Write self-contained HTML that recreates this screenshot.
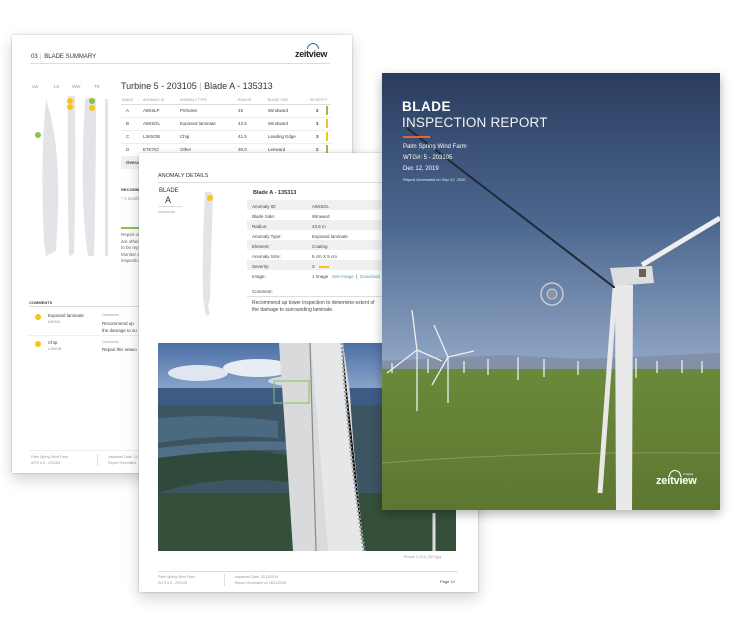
<!DOCTYPE html>
<html><head><meta charset="utf-8"><style>
*{margin:0;padding:0;box-sizing:border-box}
body{width:750px;height:628px;background:#fff;position:relative;overflow:hidden;font-family:"Liberation Sans",sans-serif;color:#333}
.a{position:absolute;white-space:nowrap}
.pg{position:absolute;background:#fff;box-shadow:0 6px 14px rgba(0,0,0,.18),0 0 2px rgba(0,0,0,.25)}
.t{font-size:4.5px;color:#444}
.g{color:#999}
</style></head><body>

<!-- Page 1 -->
<div class="pg" style="left:12px;top:35px;width:340px;height:438px">
 <div class="a" style="left:19px;top:19px;font-size:6px;color:#333">03 <span style="color:#bbb">|</span>&nbsp; BLADE SUMMARY</div>
 <div class="a" style="left:18px;top:28px;width:300px;height:1px;background:#ddd"></div>
 <div class="a" style="left:283px;top:14px;font-size:9px;font-weight:bold;color:#222;letter-spacing:-.3px">zeitview</div>
 <div class="a" style="left:295px;top:8px;width:12px;height:6px;border:1px solid #3a6ea5;border-bottom:none;border-radius:6px 6px 0 0"></div>
 <div class="a t g" style="left:20px;top:49px">LW</div>
 <div class="a t g" style="left:42px;top:49px">LE</div>
 <div class="a t g" style="left:60px;top:49px">WW</div>
 <div class="a t g" style="left:82px;top:49px">TE</div>
 <svg class="a" style="left:18px;top:56px" width="90" height="175">
  <path d="M16 8 Q30 50 28 120 L26 160 L16 165 L14 150 Q10 70 16 8Z" fill="#e3e4e8"/>
  <path d="M38 5 L45 5 Q46 90 44 163 L39 165 Q37 90 38 5Z" fill="#e3e4e8"/>
  <path d="M55 8 Q62 5 66 8 Q66 90 64 165 L58 165 L56 150 Q50 100 55 8Z" fill="#e3e4e8"/>
  <path d="M75 8 L78 8 L78 165 L75 165Z" fill="#e3e4e8"/>
  <circle cx="8" cy="44" r="3" fill="#8ac24a"/>
  <circle cx="40" cy="10" r="3" fill="#f5c518"/><circle cx="40" cy="16" r="3" fill="#f5c518"/>
  <circle cx="62" cy="10" r="3" fill="#8ac24a"/><circle cx="62" cy="17" r="3" fill="#f5c518"/>
 </svg>
 <div class="a" style="left:109px;top:46px;font-size:9px;color:#333">Turbine 5 - 203105 <span style="color:#bbb">|</span> Blade A - 135313</div>
 <div class="a t g" style="left:110px;top:63px;font-size:3.5px">IMAGE</div>
 <div class="a t g" style="left:131px;top:63px;font-size:3.5px">ANOMALY ID</div>
 <div class="a t g" style="left:168px;top:63px;font-size:3.5px">ANOMALY TYPE</div>
 <div class="a t g" style="left:226px;top:63px;font-size:3.5px">RADIUS</div>
 <div class="a t g" style="left:256px;top:63px;font-size:3.5px">BLADE SIDE</div>
 <div class="a t g" style="left:298px;top:63px;font-size:3.5px">SEVERITY</div>
 <div class="a" style="left:109px;top:69px;width:210px;height:1px;background:#ddd"></div>
 <div class="a t" style="left:114px;top:73px">A</div><div class="a t" style="left:131px;top:73px">A6K5LP</div><div class="a t" style="left:168px;top:73px">Pinholes</div><div class="a t" style="left:226px;top:73px">45</div><div class="a t" style="left:256px;top:73px">Windward</div><div class="a t" style="left:304px;top:73px;font-weight:bold">2</div><div class="a" style="left:314px;top:71px;width:2px;height:9px;background:#8ac24a"></div>
 <div class="a" style="left:109px;top:82px;width:210px;height:1px;background:#eee"></div>
 <div class="a t" style="left:114px;top:86px">B</div><div class="a t" style="left:131px;top:86px">A5K5OL</div><div class="a t" style="left:168px;top:86px">Exposed laminate</div><div class="a t" style="left:226px;top:86px">43.5</div><div class="a t" style="left:256px;top:86px">Windward</div><div class="a t" style="left:304px;top:86px;font-weight:bold">3</div><div class="a" style="left:314px;top:84px;width:2px;height:9px;background:#f5c518"></div>
 <div class="a" style="left:109px;top:95px;width:210px;height:1px;background:#eee"></div>
 <div class="a t" style="left:114px;top:99px">C</div><div class="a t" style="left:131px;top:99px">L2K5OB</div><div class="a t" style="left:168px;top:99px">Chip</div><div class="a t" style="left:226px;top:99px">41.5</div><div class="a t" style="left:256px;top:99px">Leading Edge</div><div class="a t" style="left:304px;top:99px;font-weight:bold">3</div><div class="a" style="left:314px;top:97px;width:2px;height:9px;background:#f5c518"></div>
 <div class="a" style="left:109px;top:108px;width:210px;height:1px;background:#eee"></div>
 <div class="a t" style="left:114px;top:112px">D</div><div class="a t" style="left:131px;top:112px">E7K7IO</div><div class="a t" style="left:168px;top:112px">Other</div><div class="a t" style="left:226px;top:112px">35.0</div><div class="a t" style="left:256px;top:112px">Leeward</div><div class="a t" style="left:304px;top:112px;font-weight:bold">2</div><div class="a" style="left:314px;top:110px;width:2px;height:9px;background:#8ac24a"></div>
 <div class="a" style="left:109px;top:121px;width:210px;height:13px;background:#f0f0f2"></div>
 <div class="a t" style="left:114px;top:125px;font-weight:bold">Overall</div>
 <div class="a t" style="left:109px;top:152px;font-weight:bold;font-size:4px">RECOMMENDATIONS</div>
 <div class="a t g" style="left:109px;top:161px">* A modified</div>
 <div class="a" style="left:109px;top:192px;width:30px;height:1.5px;background:#8ac24a"></div>
 <div class="a t" style="left:109px;top:197px;line-height:6.5px;color:#666">Repair on<br>are other<br>to be rep<br>Monitor a<br>inspectio</div>
 <div class="a t" style="left:17px;top:265px;font-weight:bold;font-size:4px">COMMENTS</div>
 <div class="a" style="left:17px;top:271px;width:310px;height:1px;background:#ddd"></div>
 <div class="a" style="left:23px;top:279px;width:6px;height:6px;border-radius:50%;background:#f5c518"></div>
 <div class="a t" style="left:36px;top:278px">Exposed laminate</div><div class="a t g" style="left:36px;top:285px;font-size:3.5px">A5K5OL</div>
 <div class="a t g" style="left:90px;top:278px;font-size:3.5px">Comments</div>
 <div class="a t" style="left:90px;top:285px;line-height:7px">Recommend up<br>the damage to su</div>
 <div class="a" style="left:17px;top:300px;width:310px;height:1px;background:#eee"></div>
 <div class="a" style="left:23px;top:306px;width:6px;height:6px;border-radius:50%;background:#f5c518"></div>
 <div class="a t" style="left:36px;top:305px">Chip</div><div class="a t g" style="left:36px;top:312px;font-size:3.5px">L2K5OB</div>
 <div class="a t g" style="left:90px;top:305px;font-size:3.5px">Comments</div>
 <div class="a t" style="left:90px;top:312px">Repair this seaso</div>
 <div class="a" style="left:17px;top:415px;width:310px;height:1px;background:#eee"></div>
 <div class="a t g" style="left:19px;top:420px;font-size:3.5px;line-height:5.5px">Palm Spring Wind Farm<br>WTG # 5 - 203105</div>
 <div class="a" style="left:85px;top:419px;width:1px;height:12px;background:#ddd"></div>
 <div class="a t g" style="left:96px;top:420px;font-size:3.5px;line-height:5.5px">Inspected Date: 12/12/2019<br>Report Generated</div>
</div>

<!-- Page 2 -->
<div class="pg" style="left:139px;top:153px;width:339px;height:439px">
 <div class="a" style="left:19px;top:20px;font-size:5.5px;color:#333">ANOMALY DETAILS</div>
 <div class="a" style="left:19px;top:29px;width:320px;height:1px;background:#ddd"></div>
 <div class="a" style="left:20px;top:35px;font-size:6px;color:#333">BLADE</div>
 <div class="a" style="left:26px;top:42px;font-size:9px;color:#333">A</div>
 <div class="a" style="left:19px;top:53px;width:24px;height:1px;background:#ddd"></div>
 <div class="a g" style="left:19px;top:57px;font-size:3px">WINDWARD</div>
 <svg class="a" style="left:58px;top:37px" width="20" height="128"><path d="M8 2 Q14 1 16 4 Q14 70 13 108 L11 116 L13 124 L9 126 L7 115 L6 106 Q5 60 8 2Z" fill="#e3e4e8"/><circle cx="13" cy="8" r="3" fill="#f5c518"/></svg>
 <div class="a" style="left:114px;top:37px;font-size:5.5px;font-weight:bold;color:#333">Blade A - 135313</div>
 <div class="a" style="left:108px;top:47px;width:231px;height:10px;background:#f0f0f2"></div>
 <div class="a" style="left:108px;top:67px;width:231px;height:10px;background:#f0f0f2"></div>
 <div class="a" style="left:108px;top:87px;width:231px;height:10px;background:#f0f0f2"></div>
 <div class="a" style="left:108px;top:107px;width:231px;height:10px;background:#f0f0f2"></div>
 <div class="a t" style="left:113px;top:49px;line-height:10px">Anomaly ID:<br>Blade Side:<br>Radius:<br>Anomaly Type:<br>Element:<br>Anomaly Size:<br>Severity:<br>Image:</div>
 <div class="a t" style="left:173px;top:49px;line-height:10px">A5K5OL<br>Winward<br>43.5 m<br>Exposed laminate<br>Coating<br>5 cm X 5 cm<br>3 <span style="display:inline-block;width:10px;height:1.5px;background:#f5c518;vertical-align:middle;margin-left:3px"></span><br>1 Image &nbsp;&nbsp;<span style="color:#4aa3b5">See Image</span> &nbsp;| &nbsp;<span style="color:#4aa3b5">Download</span></div>
 <div class="a t" style="left:113px;top:136px">Comment:</div>
 <div class="a" style="left:108px;top:143px;width:231px;height:1px;background:#ddd"></div>
 <div class="a t" style="left:113px;top:147px;font-size:5px;line-height:7px;color:#444">Recommend up tower inspection to determine extent of<br>the damage to surrounding laminate.</div>
 <!-- photo -->
 <svg class="a" style="left:19px;top:190px" width="298" height="208">
  <defs><linearGradient id="sk" x1="0" y1="0" x2="0" y2="1"><stop offset="0" stop-color="#4b6fa6"/><stop offset="1" stop-color="#9db5d6"/></linearGradient></defs>
  <rect width="298" height="60" fill="url(#sk)"/>
  <ellipse cx="40" cy="30" rx="30" ry="8" fill="#dfe6f0"/><ellipse cx="100" cy="25" rx="35" ry="9" fill="#e8edf4"/><ellipse cx="150" cy="38" rx="40" ry="6" fill="#cfd9e8"/>
  <rect y="45" width="298" height="20" fill="#3d5c85"/>
  <rect y="62" width="298" height="146" fill="#3d5462"/>
  <path d="M0 75 Q60 70 120 78 L120 95 Q60 90 0 100Z" fill="#4a6a80"/>
  <path d="M0 110 Q80 100 140 115 L140 140 Q60 130 0 150Z" fill="#2f4a3a"/>
  <rect y="150" width="298" height="58" fill="#34503a"/>
  <path d="M0 105 Q90 95 150 100 L150 108 Q80 104 0 115Z" fill="#506e86"/>
  <path d="M121 0 L185 0 L192 50 Q196 120 206 208 L135 208 Q128 100 121 0Z" fill="#d8dadc"/>
  <path d="M153 0 L185 0 L206 208 L170 208Z" fill="#e6e7e8"/>
  <path d="M152 0 L158 208" stroke="#888" stroke-width="1.2"/>
  <path d="M184 0 Q190 100 206 208" stroke="#9a9a9a" stroke-width="3" stroke-dasharray="2 2"/>
  <rect x="116" y="38" width="35" height="22" fill="none" stroke="#8ac24a" stroke-width="1"/>
  <path d="M276 170 L276 208" stroke="#ddd" stroke-width="3"/>
 </svg>
 <div class="a t g" style="left:265px;top:402px;font-size:3.5px">Picture 2 | DJI_0573.jpg</div>
 <div class="a" style="left:19px;top:418px;width:300px;height:1px;background:#ddd"></div>
 <div class="a t g" style="left:19px;top:422px;font-size:3.5px;line-height:5.5px">Palm Spring Wind Farm<br>WTG # 5 - 203105</div>
 <div class="a" style="left:85px;top:421px;width:1px;height:12px;background:#ddd"></div>
 <div class="a t g" style="left:96px;top:422px;font-size:3.5px;line-height:5.5px">Inspected Date: 12/12/2019<br>Report Generated on 18/12/2020</div>
 <div class="a t" style="left:301px;top:426px;font-size:4px">Page 10</div>
</div>

<!-- Cover -->
<div class="pg" style="left:382px;top:73px;width:338px;height:437px;overflow:hidden;box-shadow:0 4px 10px rgba(0,0,0,.3)">
 <svg width="338" height="437" style="position:absolute;left:0;top:0">
  <defs>
   <linearGradient id="cs" x1="0" y1="0" x2="0" y2="1"><stop offset="0" stop-color="#2a3c5e"/><stop offset=".35" stop-color="#4d6890"/><stop offset=".68" stop-color="#93a8c6"/><stop offset=".7" stop-color="#a9b9cf"/></linearGradient>
   <linearGradient id="cg" x1="0" y1="0" x2="0" y2="1"><stop offset="0" stop-color="#6a8a3a"/><stop offset="1" stop-color="#5e7630"/></linearGradient>
  </defs>
  <rect width="338" height="437" fill="url(#cs)"/>
  <path d="M0 288 L120 282 L200 286 L338 280 L338 298 L0 298Z" fill="#8290a8"/>
  <rect y="296" width="338" height="141" fill="url(#cg)"/>
  <path d="M0 390 Q150 378 338 380" stroke="#8a9a4e" stroke-width="1" fill="none"/>
  <g stroke="#eee" stroke-width="1.3">
   <path d="M35 277 L35 338"/><path d="M35 277 L30 237 M35 277 L5 300 M35 277 L60 288"/>
   <path d="M66 284 L66 330"/><path d="M66 284 L52 252 M66 284 L50 312 M66 284 L92 278"/>
   <path d="M136 284 L136 307 M46 286 L46 300 M82 288 L82 300 M106 286 L106 302 M162 286 L162 304 M196 288 L196 302 M254 285 L254 305 M275 288 L275 300 M300 287 L300 300 M320 288 L320 300 M10 290 L10 300"/>
  </g>
  <g stroke="#f2f2f2" fill="#f0f0f0">
   <path d="M233 215 L25 55" stroke="#1e2a38" stroke-width="2"/>
   <path d="M260 192 L338 145" stroke="#eeeeee" stroke-width="5"/>
   <path d="M233 215 L218 420" stroke="#e8e8e8" stroke-width="5"/>
   <path d="M233 212 L251 212 L250 437 L234 437Z" stroke="none" fill="#e9e9ea"/>
   <path d="M228 195 L270 193 L272 210 L232 213Z" stroke="none" fill="#dedede"/>
   <rect x="257" y="196" width="7" height="8" fill="#6b6048" stroke="none"/>
  </g>
  <circle cx="170" cy="221" r="11" fill="none" stroke="#c8ccd4" stroke-width="1.5"/>
  <circle cx="170" cy="221" r="5" fill="#8a94a4" stroke="#ddd" stroke-width=".8"/>
 </svg>
 <div class="a" style="left:20px;top:26px;font-size:13.5px;font-weight:bold;color:#fff;letter-spacing:.5px">BLADE</div>
 <div class="a" style="left:20px;top:42px;font-size:13.5px;color:#f3f3f3;letter-spacing:.2px">INSPECTION REPORT</div>
 <div class="a" style="left:21px;top:63px;width:27px;height:1.5px;background:#e0653a"></div>
 <div class="a" style="left:21px;top:71px;font-size:6px;color:#fff">Palm Spring Wind Farm</div>
 <div class="a" style="left:21px;top:82px;font-size:6px;color:#fff">WTG#: 5 - 203105</div>
 <div class="a" style="left:21px;top:93px;font-size:6px;color:#fff">Dec 12, 2019</div>
 <div class="a" style="left:21px;top:104px;font-size:4px;color:#eee;font-style:italic">Report Generated on Sep 12, 2020</div>
 <div class="a" style="left:274px;top:402px;font-size:11px;font-weight:bold;color:#fff;letter-spacing:-.2px">zeitview</div>
 <div class="a" style="left:287px;top:397px;width:12px;height:6px;border:1.2px solid #fff;border-bottom:none;border-radius:6px 6px 0 0"></div>
 <div class="a" style="left:301px;top:399px;font-size:3px;color:#fff">insights</div>
</div>
</body></html>
